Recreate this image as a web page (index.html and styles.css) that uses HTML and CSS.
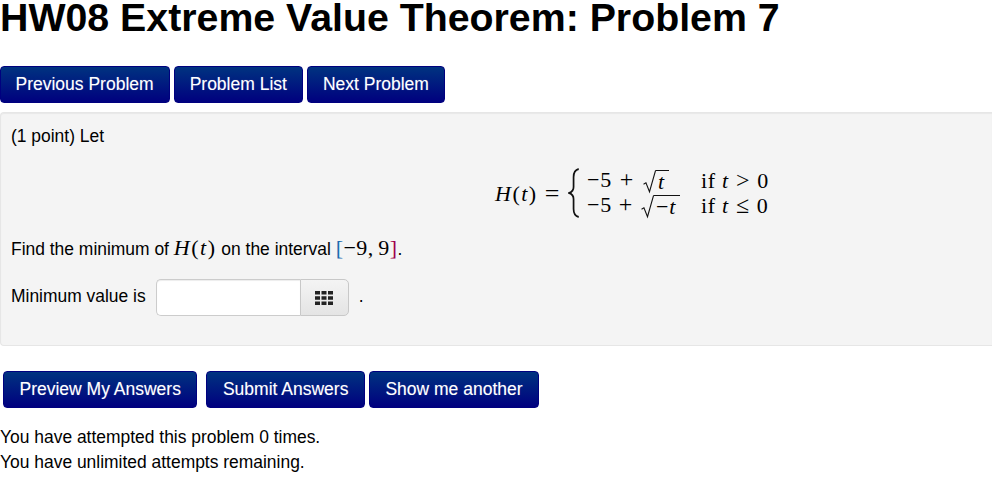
FILE: index.html
```html
<!DOCTYPE html>
<html lang="en">
<head>
<meta charset="utf-8">
<title>HW08 Extreme Value Theorem: Problem 7</title>
<link rel="stylesheet" href="styles.css">
</head>
<body>
<h1 class="title">HW08 Extreme Value Theorem: Problem 7</h1>
<nav class="nav-row">
  <a class="btn">Previous Problem</a>
  <a class="btn">Problem List</a>
  <a class="btn">Next Problem</a>
</nav>
<main class="well">
  <p class="intro">(1 point) Let</p>
  <div class="display">
    <span class="m fn"><i>H</i>(<i>t</i>)</span>
    <span class="m eq">=</span>
    <svg class="brace" viewBox="0 0 14 50" width="12" height="50" preserveAspectRatio="none" aria-hidden="true">
      <path d="M12.5 1C8 2 6.5 5 6.5 9V19C6.5 22 4.5 24 1.5 25C4.5 26 6.5 28 6.5 31V41C6.5 45 8 48 12.5 49" fill="none" stroke="#111" stroke-width="2"/>
    </svg>
    <div class="cases">
      <span class="m">−5<span class="op">+</span><span class="root"><svg class="surd" viewBox="0 0 12 22" width="13" height="24" aria-hidden="true"><path d="M0.5 13L2.7 11.8L6 20L11.5 0.6H12" fill="none" stroke="#111" stroke-width="1"/></svg><span class="radicand"><i>t</i></span></span></span>
      <span class="m">if <i>t</i><span class="op">&gt;</span>0</span>
      <span class="m">−5<span class="op">+</span><span class="root"><svg class="surd" viewBox="0 0 12 22" width="13" height="24" aria-hidden="true"><path d="M0.5 13L2.7 11.8L6 20L11.5 0.6H12" fill="none" stroke="#111" stroke-width="1"/></svg><span class="radicand">−<i>t</i></span></span></span>
      <span class="m">if <i>t</i><span class="op">≤</span>0</span>
    </div>
  </div>
  <p class="find">Find the minimum of <span class="m fn"><i>H</i>(<i>t</i>)</span> on the interval <span class="m tight"><span class="blue">[</span>−9,&#8201;9<span class="red">]</span></span>.</p>
  <div class="answer">
    <span class="label">Minimum value is</span>
    <div class="group">
      <input class="field" type="text" aria-label="Minimum value">
      <button class="addon" type="button" aria-label="Matrix">
        <svg viewBox="0 0 18 14" width="18" height="14" aria-hidden="true">
          <path class="grid-dots" d="M0 0h5v3.6H0zM6.5 0h5v3.6h-5zM13 0h5v3.6h-5zM0 5.2h5v3.6H0zM6.5 5.2h5v3.6h-5zM13 5.2h5v3.6h-5zM0 10.4h5V14H0zM6.5 10.4h5V14h-5zM13 10.4h5V14h-5z"/>
        </svg>
      </button>
    </div>
    <span class="dot">.</span>
  </div>
</main>
<div class="submit-row">
  <a class="btn">Preview My Answers</a>
  <a class="btn">Submit Answers</a>
  <a class="btn">Show me another</a>
</div>
<p class="note">You have attempted this problem 0 times.<br>You have unlimited attempts remaining.</p>
</body>
</html>
```

FILE: styles.css
```css
html, body { margin: 0; padding: 0; background: #fff; }
body {
  font-family: "Liberation Sans", Arial, sans-serif;
  font-size: 17.45px;
  line-height: 25px;
  color: #000;
}
.title {
  margin: 0;
  font-size: 39.3px;
  line-height: 35px;
  font-weight: bold;
  height: 66px;
}
.nav-row { display: flex; gap: 4.5px; }
.nav-row .btn { padding: 0 15px 0 14.5px; }
.submit-row { display: flex; margin: 25px 0 0 3px; gap: 9px; }
.submit-row .btn { padding: 0 15.5px; }
.submit-row .btn:last-child { margin-left: -5px; }
.btn {
  display: block;
  box-sizing: border-box;
  height: 37px;
  border: 1px solid #00007f;
  border-radius: 4px;
  background: linear-gradient(#003380, #00007f);
  color: #fff;
  font-size: 17.5px;
  line-height: 34px;
  text-shadow: 0 0 1px rgba(255,255,255,.3);
}
.well {
  box-sizing: border-box;
  height: 234px;
  margin-top: 9px;
  padding: 11px 11px 11px 10px;
  background: #f4f4f4;
  border: 1px solid #e6e6e6;
  border-right-width: 0;
  border-radius: 4px 0 0 4px;
  box-shadow: inset 0 1px 1px rgba(0,0,0,.05);
}
.intro { margin: 0; }
.display {
  display: flex;
  align-items: center;
  margin: 17px 0 0 484px;
  height: 54px;
}
.m {
  font-family: "Liberation Serif", "Times New Roman", serif;
  font-size: 22px;
  letter-spacing: .7px;
  white-space: nowrap;
}
.fn { letter-spacing: 1.5px; }
.tight { letter-spacing: .4px; }
.eq { margin: 0 8px 0 7px; font-size: 26px; line-height: 25px; }
.brace { margin-right: 7px; flex: none; }
.op { margin: 0 8px; font-size: 24px; line-height: 20px; }
.cases .m + .m .op { margin: 0 7px; }
.cases {
  display: grid;
  grid-template-columns: max-content max-content;
  column-gap: 21px;
  grid-auto-rows: 25px;
  align-items: center;
}
.root { display: inline-flex; align-items: flex-start; vertical-align: -7px; height: 24px; margin-left: 1px; }
.radicand { display: block; border-top: 1px solid #111; line-height: 22px; height: 22px; padding: 0 4px 0 2px; }
.surd { display: block; flex: none; }
.find { margin: 15px 0 0; }
.blue { color: #1c6bb0; }
.red { color: #a00050; }
.answer { display: flex; align-items: center; margin-top: 17px; height: 37px; }
.label { padding-bottom: 2px; }
.group { display: flex; margin-left: 10px; height: 37px; }
.field {
  box-sizing: border-box;
  width: 144px;
  height: 37px;
  margin: 0;
  padding: 0 6px;
  background: #fff;
  border: 1px solid #ccc;
  border-right: 0;
  border-radius: 5px 0 0 5px;
  box-shadow: inset 0 1px 1px rgba(0,0,0,.075);
}
.addon {
  box-sizing: border-box;
  width: 49px;
  height: 37px;
  padding: 0;
  display: flex;
  align-items: center;
  justify-content: center;
  background: linear-gradient(#f4f4f4, #e4e4e4);
  border: 1px solid #c8c8c8;
  border-radius: 0 5px 5px 0;
}
.grid-dots { fill: #222; }
.dot { margin-left: 10px; padding-bottom: 2px; }
.note { margin: 17px 0 0; }
```
